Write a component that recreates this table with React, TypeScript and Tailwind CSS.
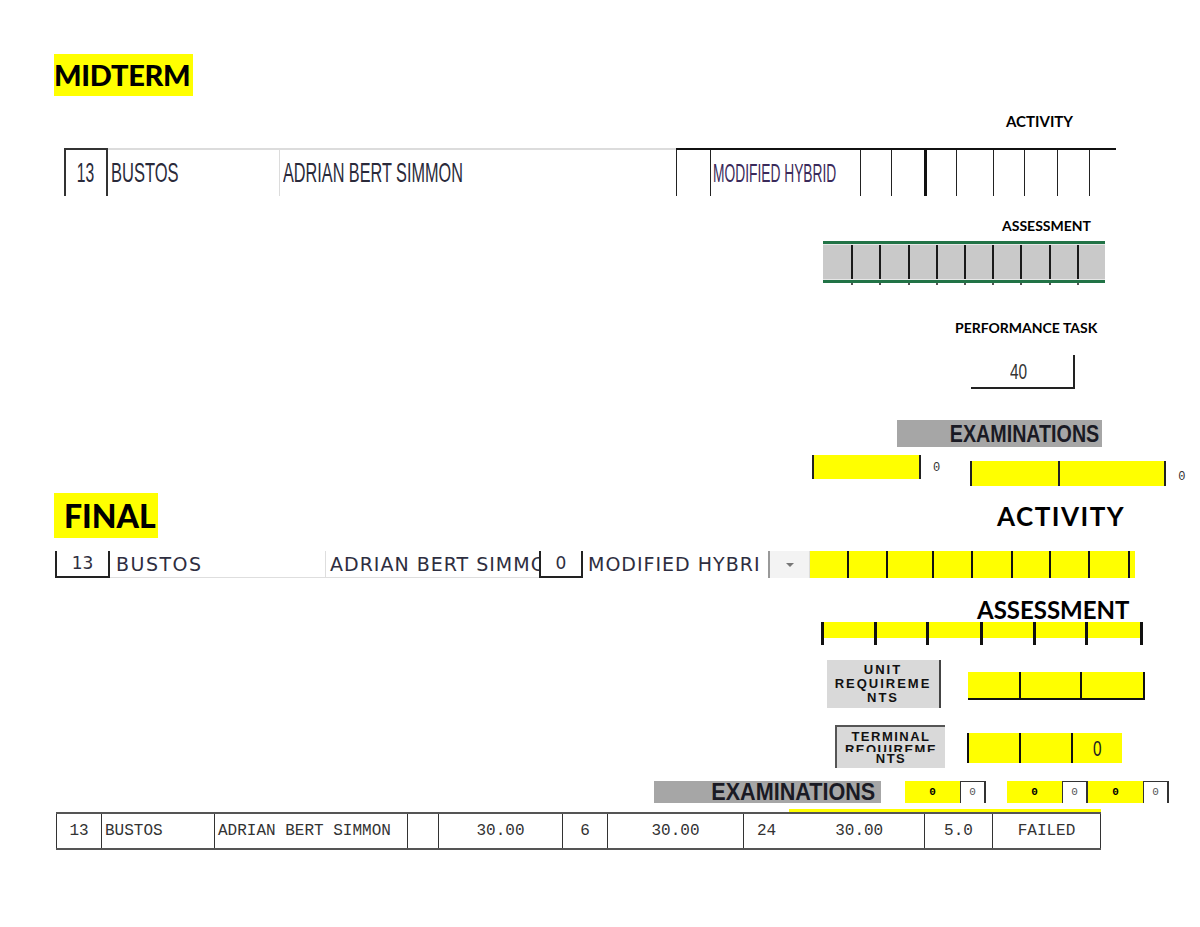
import type { ReactNode } from 'react';

const calibri = { fontFamily: '"Lato", "Open Sans", sans-serif' };
const arial = { fontFamily: '"Liberation Sans", Arial, sans-serif' };
const dejavu = { fontFamily: '"DejaVu Sans", Verdana, sans-serif' };
const mono = { fontFamily: '"Liberation Mono", "Courier New", monospace' };

function Narrow({ children, className = '' }: { children: ReactNode; className?: string }) {
  return (
    <span className={`inline-block origin-left whitespace-nowrap ${className}`} style={arial}>
      {children}
    </span>
  );
}

function MidtermRow() {
  const tail = [
    'w-[31px] border-l border-[#222]',
    'w-[33px] border-l border-[#222]',
    'w-[32px] border-l-[3px] border-[#111]',
    'w-[37px] border-l border-[#222]',
    'w-[31px] border-l border-[#222]',
    'w-[33px] border-l border-[#222]',
    'w-[32px] border-l border-[#222]',
    'w-[27px] border-l border-[#222]',
  ];
  return (
    <div className="mt-[18px] ml-[64px] flex h-[48px] text-[#2a2a3a]">
      <div className="w-[44px] border-2 border-b-0 border-[#333] flex items-center justify-end pr-[12px]">
        <Narrow className="text-[28px] scale-x-[0.56] origin-right">13</Narrow>
      </div>
      <div className="w-[171px] border-t-2 border-[#dcdcdc] flex items-center pl-[3px]">
        <Narrow className="text-[28px] scale-x-[0.59]">BUSTOS</Narrow>
      </div>
      <div className="w-[397px] border-t-2 border-l border-[#dcdcdc] flex items-center pl-[3px]">
        <Narrow className="text-[28px] scale-x-[0.58]">ADRIAN BERT SIMMON</Narrow>
      </div>
      <div className="flex border-t-2 border-[#111]">
        <div className="w-[34px] border-l border-[#222]" />
        <div className="w-[150px] border-l border-[#222] flex items-center pl-[2px]">
          <Narrow className="text-[26px] scale-x-[0.53] text-[#3a2a5a]">MODIFIED HYBRID</Narrow>
        </div>
        {tail.map((c, i) => (
          <div key={i} className={c} />
        ))}
      </div>
    </div>
  );
}

function AssessmentGrid() {
  return (
    <div className="mt-[7px] ml-[823px] w-[282px]">
      <div className="h-[3px] bg-[#217346]" />
      <div className="h-[1px] bg-[#e6e6e6]" />
      <div className="grid grid-cols-10 h-[34px] bg-[#c9c9c9]">
        {Array(10).fill(0).map((_, i) => (
          <div key={i} className={i === 0 ? '' : 'border-l-2 border-[#1a1a1a]'} />
        ))}
      </div>
      <div className="h-[1px] bg-[#e6e6e6]" />
      <div className="h-[3px] bg-[#217346]" />
      <div className="grid grid-cols-10 h-[2px]">
        {Array(10).fill(0).map((_, i) => (
          <div key={i} className={i === 0 ? '' : 'border-l-2 border-[#555]'} />
        ))}
      </div>
    </div>
  );
}

function FinalRow() {
  const yellowCells = [39, 39, 46, 39, 40, 38, 39, 40];
  return (
    <div className="mt-[13px] ml-[55px] flex h-[27px] text-[#2e2e40]" style={dejavu}>
      <div className="w-[55px] border-x-2 border-b-2 border-[#222] flex items-center justify-center text-[17px]">13</div>
      <div className="w-[216px] border-r border-b border-[#dedede] flex items-center pl-[6px] text-[19px] tracking-[1.5px]">
        BUSTOS
      </div>
      <div className="w-[213px] border-b border-[#dedede] pl-[4px] overflow-hidden">
        <div className="w-[260px] h-full flex items-center text-[19px] tracking-[1px] whitespace-nowrap">ADRIAN BERT SIMMON</div>
      </div>
      <div className="w-[44px] border-x-2 border-b-2 border-[#222] flex items-center justify-center text-[17px]">0</div>
      <div className="w-[187px] border-r-2 border-[#999] pl-[5px] overflow-hidden">
        <div className="w-[220px] h-full flex items-center text-[19px] tracking-[1px] whitespace-nowrap">MODIFIED HYBRI</div>
      </div>
      <div className="w-[40px] bg-[#f3f3f3] border-r border-[#ddd] flex items-center justify-center">
        <svg width="10" height="6" viewBox="0 0 10 6">
          <path d="M1 1 L9 1 L5 5 Z" fill="#777" />
        </svg>
      </div>
      <div className="flex bg-[#ffff00] w-[325px]">
        {yellowCells.map((w, i) => (
          <div key={i} className="border-r-2 border-[#111] h-full" style={{ width: w }} />
        ))}
      </div>
    </div>
  );
}

function ExamFinalBoxes() {
  return (
    <>
      <div className="ml-[24px] flex h-[22px] text-[11px] font-bold" style={mono}>
        <div className="w-[55px] bg-[#ffff00] flex items-center justify-center">0</div>
        <div className="w-[26px] border-t border-l border-r-2 border-[#333] flex items-center justify-center font-normal text-[#555]">0</div>
      </div>
      <div className="ml-[21px] flex h-[22px] text-[11px] font-bold" style={mono}>
        <div className="w-[55px] bg-[#ffff00] flex items-center justify-center">0</div>
        <div className="w-[26px] border-t border-l border-r-2 border-[#333] flex items-center justify-center font-normal text-[#555]">0</div>
        <div className="w-[55px] bg-[#ffff00] flex items-center justify-center">0</div>
        <div className="w-[26px] border-t border-l border-r-2 border-[#333] flex items-center justify-center font-normal text-[#555]">0</div>
      </div>
    </>
  );
}

function SummaryRow() {
  return (
    <div className="ml-[56px] w-[1045px] flex h-[38px] border-y-2 border-[#555] text-[16px] text-[#333]" style={mono}>
      <div className="w-[45px] border-l border-[#333] flex items-center justify-center">13</div>
      <div className="w-[113px] border-l border-[#333] flex items-center pl-[3px]">BUSTOS</div>
      <div className="w-[193px] border-l border-[#333] flex items-center pl-[3px]">ADRIAN BERT SIMMON</div>
      <div className="w-[31px] border-l border-[#333]" />
      <div className="w-[124px] border-l border-[#333] flex items-center justify-center">30.00</div>
      <div className="w-[45px] border-l border-[#333] flex items-center justify-center">6</div>
      <div className="w-[136px] border-l border-[#333] flex items-center justify-center">30.00</div>
      <div className="w-[181px] border-l border-[#333] flex items-center pl-[13px]">
        <span>24</span>
        <span className="ml-[59px]">30.00</span>
      </div>
      <div className="w-[68px] border-l border-[#333] flex items-center justify-center">5.0</div>
      <div className="w-[109px] border-x border-[#333] flex items-center justify-center">FAILED</div>
    </div>
  );
}

export default function App() {
  return (
    <div className="w-[1200px] h-[927px] bg-white overflow-hidden flex flex-col text-black">
      <div className="mt-[54px] ml-[54px] h-[42px] w-[139px] bg-[#ffff00] flex items-center">
        <span className="text-[29px] font-black tracking-[-0.3px]" style={calibri}>MIDTERM</span>
      </div>

      <div className="mt-[17px] ml-[1006px] h-[17px] text-[15px] font-bold leading-[17px]" style={calibri}>ACTIVITY</div>

      <MidtermRow />

      <div className="mt-[22px] ml-[1002px] h-[16px] text-[14px] font-bold leading-[16px]" style={calibri}>ASSESSMENT</div>

      <AssessmentGrid />

      <div className="mt-[35px] ml-[955px] h-[16px] text-[14px] font-bold leading-[16px]" style={calibri}>PERFORMANCE TASK</div>

      <div className="mt-[19px] ml-[971px] w-[104px] h-[34px] flex items-center justify-center border-b-2 border-r-2 border-[#222]">
        <Narrow className="text-[22px] scale-x-[0.7] origin-center text-[#333]">40</Narrow>
      </div>

      <div className="mt-[31px] ml-[897px] w-[205px] h-[27px] bg-[#a6a6a6] flex items-center justify-end pr-[3px]">
        <Narrow className="text-[24px] font-bold scale-x-[0.82] origin-right text-[#1a1a24]">EXAMINATIONS</Narrow>
      </div>

      <div className="mt-[8px] ml-[812px] flex items-start h-[31px]">
        <div className="w-[109px] h-[24px] bg-[#ffff00] border-x-2 border-[#222]" />
        <span className="ml-[12px] mt-[4px] text-[12px] text-[#333]" style={mono}>0</span>
        <div className="ml-[30px] mt-[6px] flex h-[25px] bg-[#ffff00]">
          <div className="w-[88px] border-l-2 border-[#222]" />
          <div className="w-[108px] border-x-2 border-[#222]" />
        </div>
        <span className="ml-[12px] mt-[13px] text-[12px] text-[#333]" style={mono}>0</span>
      </div>

      <div className="mt-[4px] ml-[54px] flex items-end h-[48px]">
        <div className="w-[104px] h-[45px] bg-[#ffff00] flex items-center pl-[10px]">
          <span className="text-[32px] font-black" style={calibri}>FINAL</span>
        </div>
        <div className="ml-[839px] mb-[8px] text-[26px] font-bold leading-[28px] tracking-[1.5px]" style={calibri}>ACTIVITY</div>
      </div>

      <FinalRow />

      <div className="mt-[22px] ml-[977px] h-[20px] text-[24px] font-bold leading-[20px]" style={calibri}>ASSESSMENT</div>

      <div className="mt-[2px] ml-[821px] flex h-[23px] w-[323px]">
        {[53, 52, 54, 53, 52, 55].map((w, i) => (
          <div key={i} className="flex flex-col border-l-[3px] border-[#111]" style={{ width: w }}>
            <div className="h-[16px] bg-[#ffff00]" />
          </div>
        ))}
        <div className="border-l-[3px] border-[#111]" />
      </div>

      <div className="mt-[15px] ml-[827px] flex items-start h-[48px]">
        <div className="w-[114px] h-[48px] bg-[#d9d9d9] border-r-2 border-[#444] flex flex-col items-center justify-center text-[13px] font-bold tracking-[2px] text-[#111]" style={arial}>
          <span className="block h-[14px] leading-[14px]">UNIT</span>
          <span className="block h-[14px] leading-[14px]">REQUIREME</span>
          <span className="block h-[14px] leading-[14px]">NTS</span>
        </div>
        <div className="ml-[27px] mt-[12px] flex h-[28px] bg-[#ffff00] border-b-2 border-[#111]">
          <div className="w-[53px] border-r-2 border-[#111]" />
          <div className="w-[61px] border-r-2 border-[#111]" />
          <div className="w-[63px] border-r-2 border-[#111]" />
        </div>
      </div>

      <div className="mt-[17px] ml-[835px] flex items-start h-[43px]">
        <div className="w-[110px] h-[43px] bg-[#d9d9d9] border-l-2 border-t-2 border-[#555] flex flex-col items-center justify-center text-[13px] font-bold tracking-[1.5px] text-[#111]" style={arial}>
          <span className="block h-[13px] leading-[13px]">TERMINAL</span>
          <span className="block h-[9px] leading-[13px] overflow-hidden">REQUIREME</span>
          <span className="block h-[14px] leading-[14px]">NTS</span>
        </div>
        <div className="ml-[22px] mt-[8px] flex h-[30px] bg-[#ffff00]">
          <div className="w-[52px] border-l-2 border-[#111]" />
          <div className="w-[52px] border-l-2 border-[#111]" />
          <div className="w-[51px] border-l-2 border-[#111] flex items-center justify-center pl-[4px]">
            <Narrow className="text-[22px] scale-x-[0.7] origin-center text-[#222]">0</Narrow>
          </div>
        </div>
      </div>

      <div className="mt-[13px] ml-[654px] flex h-[22px]">
        <div className="w-[227px] bg-[#a6a6a6] flex items-center justify-end pr-[6px]">
          <Narrow className="text-[24px] font-bold scale-x-[0.9] origin-right text-[#1a1a24]">EXAMINATIONS</Narrow>
        </div>
        <ExamFinalBoxes />
      </div>

      <div className="mt-[6px] ml-[789px] w-[312px] h-[3px] bg-[#ffff00]" />

      <SummaryRow />
    </div>
  );
}
